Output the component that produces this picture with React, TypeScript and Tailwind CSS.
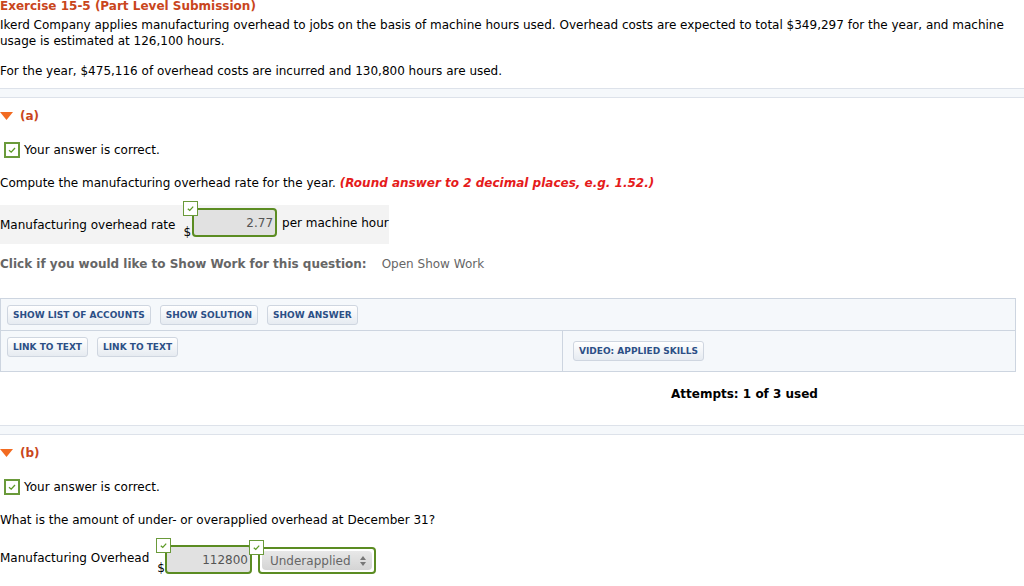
import React from "react";

const Check = () => (
  <span className="inline-flex h-[16px] w-[16px] shrink-0 items-center justify-center border-2 border-[#6a9a3a] bg-white">
    <svg width="10" height="10" viewBox="0 0 10 10">
      <path d="M2 5.2 L4.2 7.2 L8 3" fill="none" stroke="#5d9a26" strokeWidth="1.3" />
    </svg>
  </span>
);

const SmallCheck = () => (
  <span className="inline-flex h-[15px] w-[15px] items-center justify-center border border-[#6a9a3a] bg-white">
    <svg width="9" height="9" viewBox="0 0 10 10">
      <path d="M2 5.2 L4.2 7.2 L8 3" fill="none" stroke="#5d9a26" strokeWidth="1.4" />
    </svg>
  </span>
);

const Btn = ({ children }: { children: React.ReactNode }) => (
  <span className="inline-flex h-[20px] shrink-0 items-center whitespace-nowrap rounded-[3px] border border-[#cfd6e0] bg-gradient-to-b from-[#ffffff] to-[#e6ebf1] px-[5px] text-[9px] font-bold leading-none text-[#2c4f86]">
    {children}
  </span>
);

const Triangle = () => (
  <svg width="13" height="8" viewBox="0 0 13 8" className="mr-[7px]">
    <path d="M0 0 H13 L6.5 8 Z" fill="#f26b21" />
  </svg>
);

const Sep = () => <div className="h-[10px] border-y border-[#dde2ea] bg-[#f5f8fb]" />;

export default function App() {
  return (
    <div
      className="w-[1024px] h-[586px] overflow-hidden bg-white text-[12px] leading-[16px] text-black"
      style={{ fontFamily: '"DejaVu Sans", Verdana, sans-serif' }}
    >
      <div className="font-bold leading-[13px] text-[#c9461c]">Exercise 15-5 (Part Level Submission)</div>
      <div className="mt-[4px] pr-[10px]">
        Ikerd Company applies manufacturing overhead to jobs on the basis of machine hours used. Overhead costs are expected to total $349,297 for the year, and machine usage is estimated at 126,100 hours.
      </div>
      <div className="mt-[14px]">For the year, $475,116 of overhead costs are incurred and 130,800 hours are used.</div>
      <div className="mt-[9px]">
        <Sep />
      </div>

      {/* Part a */}
      <div className="mt-[10px] flex items-center font-bold text-[#c9461c]">
        <Triangle />
        <span>(a)</span>
      </div>
      <div className="mt-[18px] ml-[4px] flex items-center">
        <Check />
        <span className="ml-[4px]">Your answer is correct.</span>
      </div>
      <div className="mt-[17px]">
        Compute the manufacturing overhead rate for the year.{" "}
        <span className="font-bold italic text-[#e51b1b]">(Round answer to 2 decimal places, e.g. 1.52.)</span>
      </div>
      <div className="mt-[14px] flex h-[39px] w-[389px] items-center whitespace-nowrap bg-[#f3f3f3]">
        <span className="shrink-0">Manufacturing overhead rate</span>
        <div className="relative ml-[8px] flex h-full shrink-0 items-end">
          <span className="mb-[4px]">$</span>
          <div className="absolute left-0 top-[-4px]">
            <SmallCheck />
          </div>
          <div className="mb-[7px] ml-[1px] flex h-[29px] w-[85px] items-center justify-end rounded-[4px] border-2 border-[#5b8c22] bg-[#e1e1e1] pr-[2px] text-[#555]">
            2.77
          </div>
        </div>
        <span className="ml-[5px] mb-[3px] shrink-0">per machine hour</span>
      </div>
      <div className="mt-[12px] flex whitespace-nowrap">
        <span className="font-bold text-[#666]">Click if you would like to Show Work for this question:</span>
        <span className="ml-[15px] text-[#666]">Open Show Work</span>
      </div>

      {/* Panel */}
      <div className="mt-[26px] w-[1016px] border border-[#cdd5e0] bg-[#f5f8fb]">
        <div className="flex h-[32px] items-center gap-[9px] border-b border-[#cdd5e0] pl-[6px] pt-[1px]">
          <Btn>SHOW LIST OF ACCOUNTS</Btn>
          <Btn>SHOW SOLUTION</Btn>
          <Btn>SHOW ANSWER</Btn>
        </div>
        <div className="flex h-[40px]">
          <div className="flex w-[561px] items-start gap-[9px] pl-[6px] pt-[6px]">
            <Btn>LINK TO TEXT</Btn>
            <Btn>LINK TO TEXT</Btn>
          </div>
          <div className="flex flex-1 items-center border-l border-[#cdd5e0] pl-[10px]">
            <Btn>VIDEO: APPLIED SKILLS</Btn>
          </div>
        </div>
      </div>
      <div className="mt-[14px] pl-[671px] font-bold">Attempts: 1 of 3 used</div>
      <div className="mt-[23px]">
        <Sep />
      </div>

      {/* Part b */}
      <div className="mt-[10px] flex items-center font-bold text-[#c9461c]">
        <Triangle />
        <span>(b)</span>
      </div>
      <div className="mt-[18px] ml-[4px] flex items-center">
        <Check />
        <span className="ml-[4px]">Your answer is correct.</span>
      </div>
      <div className="mt-[17px]">What is the amount of under- or overapplied overhead at December 31?</div>
      <div className="mt-[10px] flex h-[40px] items-center whitespace-nowrap">
        <span className="shrink-0">Manufacturing Overhead</span>
        <div className="relative ml-[8px] flex h-full shrink-0 items-end">
          <span className="mb-[2px]">$</span>
          <div className="absolute left-[-1px] top-0">
            <SmallCheck />
          </div>
          <div className="mb-[4px] flex h-[29px] w-[87px] items-center justify-end rounded-[4px] border-2 border-[#5b8c22] bg-[#e1e1e1] pr-[2px] text-[#555]">
            112800
          </div>
          <div className="absolute left-[92px] top-[2px]">
            <SmallCheck />
          </div>
          <div className="mb-[4px] ml-[6px] flex h-[27px] w-[118px] items-center rounded-[4px] border-2 border-[#5b8c22] bg-white p-[2px]">
            <div className="flex h-full w-full items-center justify-between rounded-[4px] bg-gradient-to-b from-[#e8e8e8] to-[#d4d4d4] pl-[8px] pr-[6px] text-[#666]">
              <span>Underapplied</span>
              <svg width="6" height="10" viewBox="0 0 6 10">
                <path d="M0 4 L3 0 L6 4 Z M0 6 L3 10 L6 6 Z" fill="#777" />
              </svg>
            </div>
          </div>
        </div>
      </div>
    </div>
  );
}
